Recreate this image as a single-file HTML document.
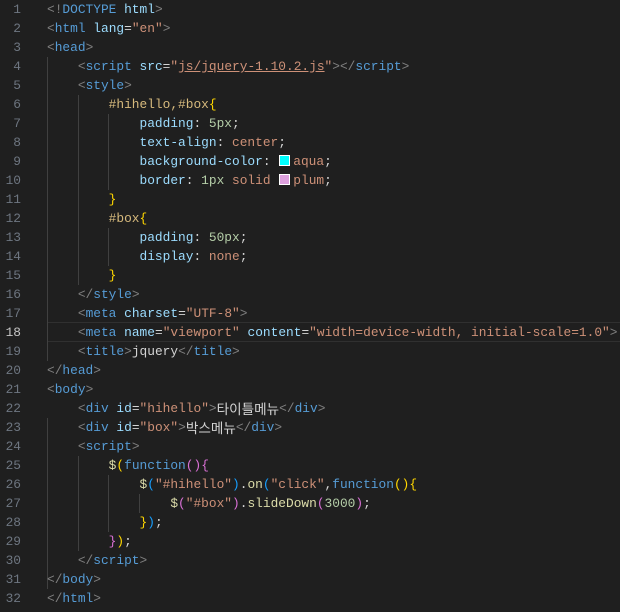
<!DOCTYPE html>
<html><head><meta charset="utf-8"><style>
body{margin:0;width:620px;height:612px;background:#1f1f1f;overflow:hidden;font-family:"Liberation Mono",monospace;font-size:12.85px;position:relative}
.l{position:absolute;left:0;height:19px;line-height:19px;width:620px;white-space:pre;overflow:hidden}
.n{position:absolute;left:0;width:21px;text-align:right;color:#6e7681}
.c{position:absolute;left:47px;top:0;height:19px;color:#d4d4d4}
.g{position:absolute;width:1px;background:#404040}
.p{color:#808080}.t{color:#569cd6}.a{color:#9cdcfe}.s{color:#ce9178}.sel{color:#d7ba7d}.num{color:#b5cea8}.f{color:#dcdcaa}
.y{color:#ffd700}.m{color:#da70d6}.b{color:#179fff}
.k{font-family:"Noto Sans CJK KR",sans-serif;font-size:13.6px;display:inline-block;height:19px;line-height:19px;vertical-align:top}
.sw{display:inline-block;width:9px;height:9px;border:1px solid #fff;margin:0 3px 0 1px;vertical-align:-1px}
</style></head><body>
<div style="position:absolute;left:47px;top:322px;width:573px;height:18px;border:1px solid #303030;border-right:none"></div>
<div class="g" style="left:47px;top:57px;height:304px"></div>
<div class="g" style="left:47px;top:418px;height:171px"></div>
<div class="g" style="left:78px;top:95px;height:190px"></div>
<div class="g" style="left:78px;top:456px;height:95px"></div>
<div class="g" style="left:108px;top:114px;height:76px"></div>
<div class="g" style="left:108px;top:228px;height:38px"></div>
<div class="g" style="left:108px;top:475px;height:57px"></div>
<div class="g" style="left:139px;top:494px;height:19px"></div>

<div class="l" style="top:0"><span class="n">1</span><span class="c"><span class="p">&lt;!</span><span class="t">DOCTYPE</span> <span class="a">html</span><span class="p">&gt;</span></span></div>
<div class="l" style="top:19px"><span class="n">2</span><span class="c"><span class="p">&lt;</span><span class="t">html</span> <span class="a">lang</span>=<span class="s">"en"</span><span class="p">&gt;</span></span></div>
<div class="l" style="top:38px"><span class="n">3</span><span class="c"><span class="p">&lt;</span><span class="t">head</span><span class="p">&gt;</span></span></div>
<div class="l" style="top:57px"><span class="n">4</span><span class="c">    <span class="p">&lt;</span><span class="t">script</span> <span class="a">src</span>=<span class="s">"<u>js/jquery-1.10.2.js</u>"</span><span class="p">&gt;&lt;/</span><span class="t">script</span><span class="p">&gt;</span></span></div>
<div class="l" style="top:76px"><span class="n">5</span><span class="c">    <span class="p">&lt;</span><span class="t">style</span><span class="p">&gt;</span></span></div>
<div class="l" style="top:95px"><span class="n">6</span><span class="c">        <span class="sel">#hihello,#box</span><span class="y">{</span></span></div>
<div class="l" style="top:114px"><span class="n">7</span><span class="c">            <span class="a">padding</span>: <span class="num">5px</span>;</span></div>
<div class="l" style="top:133px"><span class="n">8</span><span class="c">            <span class="a">text-align</span>: <span class="s">center</span>;</span></div>
<div class="l" style="top:152px"><span class="n">9</span><span class="c">            <span class="a">background-color</span>: <span class="sw" style="background:aqua"></span><span class="s">aqua</span>;</span></div>
<div class="l" style="top:171px"><span class="n">10</span><span class="c">            <span class="a">border</span>: <span class="num">1px</span> <span class="s">solid</span> <span class="sw" style="background:plum"></span><span class="s">plum</span>;</span></div>
<div class="l" style="top:190px"><span class="n">11</span><span class="c">        <span class="y">}</span></span></div>
<div class="l" style="top:209px"><span class="n">12</span><span class="c">        <span class="sel">#box</span><span class="y">{</span></span></div>
<div class="l" style="top:228px"><span class="n">13</span><span class="c">            <span class="a">padding</span>: <span class="num">50px</span>;</span></div>
<div class="l" style="top:247px"><span class="n">14</span><span class="c">            <span class="a">display</span>: <span class="s">none</span>;</span></div>
<div class="l" style="top:266px"><span class="n">15</span><span class="c">        <span class="y">}</span></span></div>
<div class="l" style="top:285px"><span class="n">16</span><span class="c">    <span class="p">&lt;/</span><span class="t">style</span><span class="p">&gt;</span></span></div>
<div class="l" style="top:304px"><span class="n">17</span><span class="c">    <span class="p">&lt;</span><span class="t">meta</span> <span class="a">charset</span>=<span class="s">"UTF-8"</span><span class="p">&gt;</span></span></div>
<div class="l" style="top:323px"><span class="n" style="color:#c6c6c6">18</span><span class="c">    <span class="p">&lt;</span><span class="t">meta</span> <span class="a">name</span>=<span class="s">"viewport"</span> <span class="a">content</span>=<span class="s">"width=device-width, initial-scale=1.0"</span><span class="p">&gt;</span></span></div>
<div class="l" style="top:342px"><span class="n">19</span><span class="c">    <span class="p">&lt;</span><span class="t">title</span><span class="p">&gt;</span>jquery<span class="p">&lt;/</span><span class="t">title</span><span class="p">&gt;</span></span></div>
<div class="l" style="top:361px"><span class="n">20</span><span class="c"><span class="p">&lt;/</span><span class="t">head</span><span class="p">&gt;</span></span></div>
<div class="l" style="top:380px"><span class="n">21</span><span class="c"><span class="p">&lt;</span><span class="t">body</span><span class="p">&gt;</span></span></div>
<div class="l" style="top:399px"><span class="n">22</span><span class="c">    <span class="p">&lt;</span><span class="t">div</span> <span class="a">id</span>=<span class="s">"hihello"</span><span class="p">&gt;</span><span class="k">타이틀메뉴</span><span class="p">&lt;/</span><span class="t">div</span><span class="p">&gt;</span></span></div>
<div class="l" style="top:418px"><span class="n">23</span><span class="c">    <span class="p">&lt;</span><span class="t">div</span> <span class="a">id</span>=<span class="s">"box"</span><span class="p">&gt;</span><span class="k">박스메뉴</span><span class="p">&lt;/</span><span class="t">div</span><span class="p">&gt;</span></span></div>
<div class="l" style="top:437px"><span class="n">24</span><span class="c">    <span class="p">&lt;</span><span class="t">script</span><span class="p">&gt;</span></span></div>
<div class="l" style="top:456px"><span class="n">25</span><span class="c">        <span class="f">$</span><span class="y">(</span><span class="t">function</span><span class="m">()</span><span class="m">{</span></span></div>
<div class="l" style="top:475px"><span class="n">26</span><span class="c">            <span class="f">$</span><span class="b">(</span><span class="s">"#hihello"</span><span class="b">)</span>.<span class="f">on</span><span class="b">(</span><span class="s">"click"</span>,<span class="t">function</span><span class="y">()</span><span class="y">{</span></span></div>
<div class="l" style="top:494px"><span class="n">27</span><span class="c">                <span class="f">$</span><span class="m">(</span><span class="s">"#box"</span><span class="m">)</span>.<span class="f">slideDown</span><span class="m">(</span><span class="num">3000</span><span class="m">)</span>;</span></div>
<div class="l" style="top:513px"><span class="n">28</span><span class="c">            <span class="y">}</span><span class="b">)</span>;</span></div>
<div class="l" style="top:532px"><span class="n">29</span><span class="c">        <span class="m">}</span><span class="y">)</span>;</span></div>
<div class="l" style="top:551px"><span class="n">30</span><span class="c">    <span class="p">&lt;/</span><span class="t">script</span><span class="p">&gt;</span></span></div>
<div class="l" style="top:570px"><span class="n">31</span><span class="c"><span class="p">&lt;/</span><span class="t">body</span><span class="p">&gt;</span></span></div>
<div class="l" style="top:589px"><span class="n">32</span><span class="c"><span class="p">&lt;/</span><span class="t">html</span><span class="p">&gt;</span></span></div>
</body></html>
